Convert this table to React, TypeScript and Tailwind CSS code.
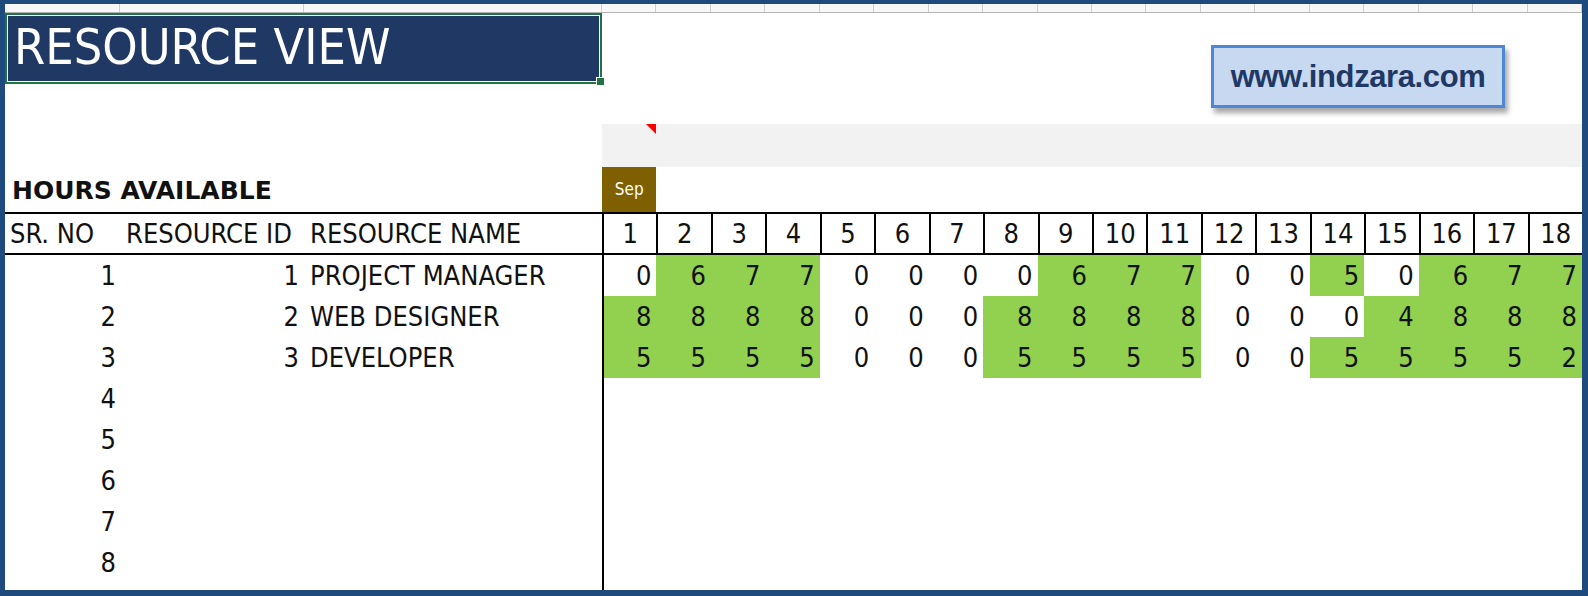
import React from 'react';

const days = Array.from({ length: 18 }, (_, i) => i + 1);

const resources = [
  { sr: 1, id: 1, name: 'PROJECT MANAGER', hours: [0, 6, 7, 7, 0, 0, 0, 0, 6, 7, 7, 0, 0, 5, 0, 6, 7, 7] },
  { sr: 2, id: 2, name: 'WEB DESIGNER', hours: [8, 8, 8, 8, 0, 0, 0, 8, 8, 8, 8, 0, 0, 0, 4, 8, 8, 8] },
  { sr: 3, id: 3, name: 'DEVELOPER', hours: [5, 5, 5, 5, 0, 0, 0, 5, 5, 5, 5, 0, 0, 5, 5, 5, 5, 2] },
  { sr: 4 },
  { sr: 5 },
  { sr: 6 },
  { sr: 7 },
  { sr: 8 },
] as { sr: number; id?: number; name?: string; hours?: number[] }[];

const sheetFont = "font-['DejaVu_Sans','Tahoma',sans-serif] [font-stretch:condensed]";

export default function App() {
  return (
    <div className="w-[1588px] h-[596px] bg-[#1e4a7d] pt-[4px] pl-[5px] pr-[6px] pb-[6px]">
      <div className={`h-full bg-white flex flex-col overflow-hidden text-[#111] ${sheetFont}`}>
        {/* column header strip */}
        <div className="h-[9px] flex border-b border-[#b4b4b4] bg-[#f7f7f7]">
          <div className="w-[597px] flex">
            <div className="w-[115px] border-r border-[#cfcfcf]" />
            <div className="w-[184px] border-r border-[#cfcfcf]" />
            <div className="flex-1 border-r border-[#cfcfcf]" />
          </div>
          <div className="flex-1 grid grid-cols-18">
            {days.map((d) => (
              <div key={d} className="border-r border-[#cfcfcf]" />
            ))}
          </div>
        </div>

        {/* title row */}
        <div className="h-[111px] flex items-start">
          <div className="relative w-[597px] h-[71px] border-2 border-[#217346] bg-white p-px">
            <div className="h-full bg-[#203864] flex items-center pl-[6px] pb-[3px]">
              <span className="text-white text-[50px] leading-none">RESOURCE VIEW</span>
            </div>
            <div className="absolute -right-[5px] -bottom-[4px] w-[9px] h-[9px] bg-[#217346] border border-white" />
          </div>
          <div className="flex-1 flex justify-end pr-[77px] pt-[32px]">
            <div className="w-[294px] h-[63px] border-[3px] border-[#4f87d6] bg-[#c6d9f1] shadow-[3px_5px_5px_rgba(0,0,0,0.35)] flex items-center justify-center">
              <span className="font-['Liberation_Sans',Arial,sans-serif] [font-stretch:normal] font-bold text-[31px] leading-none text-[#1f3864] tracking-[-0.4px]">
                www.indzara.com
              </span>
            </div>
          </div>
        </div>

        {/* gray band */}
        <div className="h-[43px] flex">
          <div className="w-[597px]" />
          <div className="flex-1 grid grid-cols-18 bg-[#f2f2f2]">
            {days.map((d) => (
              <div key={d} className="relative">
                {d === 1 && (
                  <div className="absolute top-0 right-0 w-0 h-0 border-t-[10px] border-t-[#ff0000] border-l-[10px] border-l-transparent" />
                )}
              </div>
            ))}
          </div>
        </div>

        {/* month row */}
        <div className="h-[45px] flex">
          <div className="w-[597px] flex items-center pl-[7px] pt-[2px]">
            <span className="font-bold text-[25px] leading-none [font-stretch:normal]">HOURS AVAILABLE</span>
          </div>
          <div className="flex-1 grid grid-cols-18">
            <div className="bg-[#7f6000] text-white text-[17px] flex items-center justify-center">Sep</div>
          </div>
        </div>

        {/* header row */}
        <div className="h-[43px] flex border-y-2 border-black text-[27px] leading-none">
          <div className="w-[597px] flex items-center">
            <div className="w-[117px] pl-[5px]">SR. NO</div>
            <div className="w-[180px] pl-[4px]">RESOURCE ID</div>
            <div className="flex-1 pl-[8px]">RESOURCE NAME</div>
          </div>
          <div className="flex-1 grid grid-cols-18">
            {days.map((d) => (
              <div key={d} className="border-l-2 border-black flex items-center justify-center">
                {d}
              </div>
            ))}
          </div>
        </div>

        {/* data rows */}
        {resources.map((r) => (
          <div key={r.sr} className="h-[41px] flex text-[27px] leading-none">
            <div className="w-[597px] flex items-center">
              <div className="w-[117px] text-right pr-[6px]">{r.sr}</div>
              <div className="w-[180px] text-right pr-[3px]">{r.id ?? ''}</div>
              <div className="flex-1 pl-[8px]">{r.name ?? ''}</div>
            </div>
            <div className="flex-1 grid grid-cols-18">
              {days.map((d, i) => {
                const h = r.hours?.[i];
                return (
                  <div
                    key={d}
                    className={`flex items-center justify-end pr-[5px] ${i === 0 ? 'border-l-2 border-black' : ''} ${
                      h ? 'bg-[#92d050]' : ''
                    }`}
                  >
                    {h ?? ''}
                  </div>
                );
              })}
            </div>
          </div>
        ))}
        <div className="flex-1 flex">
          <div className="w-[597px]" />
          <div className="flex-1 border-l-2 border-black" />
        </div>
      </div>
    </div>
  );
}
